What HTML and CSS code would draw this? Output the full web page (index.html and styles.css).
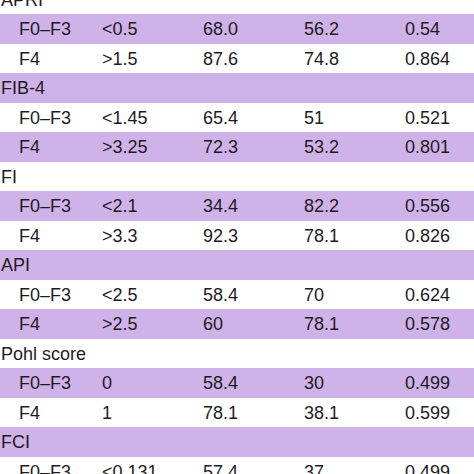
FILE: index.html
```html
<!DOCTYPE html>
<html>
<head>
<meta charset="utf-8">
<link rel="stylesheet" href="styles.css">
</head>
<body>
<div class="table">
  <div class="row section"><span>APRI</span></div>
  <div class="row sub shade"><span>F0–F3</span><span>&lt;0.5</span><span>68.0</span><span>56.2</span><span>0.54</span></div>
  <div class="row sub"><span>F4</span><span>&gt;1.5</span><span>87.6</span><span>74.8</span><span>0.864</span></div>
  <div class="row section shade"><span>FIB-4</span></div>
  <div class="row sub"><span>F0–F3</span><span>&lt;1.45</span><span>65.4</span><span>51</span><span>0.521</span></div>
  <div class="row sub shade"><span>F4</span><span>&gt;3.25</span><span>72.3</span><span>53.2</span><span>0.801</span></div>
  <div class="row section"><span>FI</span></div>
  <div class="row sub shade"><span>F0–F3</span><span>&lt;2.1</span><span>34.4</span><span>82.2</span><span>0.556</span></div>
  <div class="row sub"><span>F4</span><span>&gt;3.3</span><span>92.3</span><span>78.1</span><span>0.826</span></div>
  <div class="row section shade"><span>API</span></div>
  <div class="row sub"><span>F0–F3</span><span>&lt;2.5</span><span>58.4</span><span>70</span><span>0.624</span></div>
  <div class="row sub shade"><span>F4</span><span>&gt;2.5</span><span>60</span><span>78.1</span><span>0.578</span></div>
  <div class="row section"><span>Pohl score</span></div>
  <div class="row sub shade"><span>F0–F3</span><span>0</span><span>58.4</span><span>30</span><span>0.499</span></div>
  <div class="row sub"><span>F4</span><span>1</span><span>78.1</span><span>38.1</span><span>0.599</span></div>
  <div class="row section shade"><span>FCI</span></div>
  <div class="row sub"><span>F0–F3</span><span>&lt;0.131</span><span>57.4</span><span>37</span><span>0.499</span></div>
</div>
</body>
</html>
```
FILE: styles.css
```css
html, body {
  margin: 0;
  padding: 0;
  background: #ffffff;
  overflow: hidden;
}
body {
  width: 474px;
  height: 474px;
  font-family: "Liberation Sans", Arial, sans-serif;
  font-size: 18px;
  color: #1d1b1f;
}
.table {
  margin-top: -15.5px;
  display: flex;
  flex-direction: column;
}
.row {
  height: 29.5px;
  line-height: 29.5px;
  padding-top: 1px;
  box-sizing: border-box;
  white-space: nowrap;
}
.shade {
  background: #cfb2e8;
}
.section {
  padding-left: 1px;
}
.sub {
  display: grid;
  grid-template-columns: 83px 101px 101px 101px auto;
  padding-left: 19px;
}
```
